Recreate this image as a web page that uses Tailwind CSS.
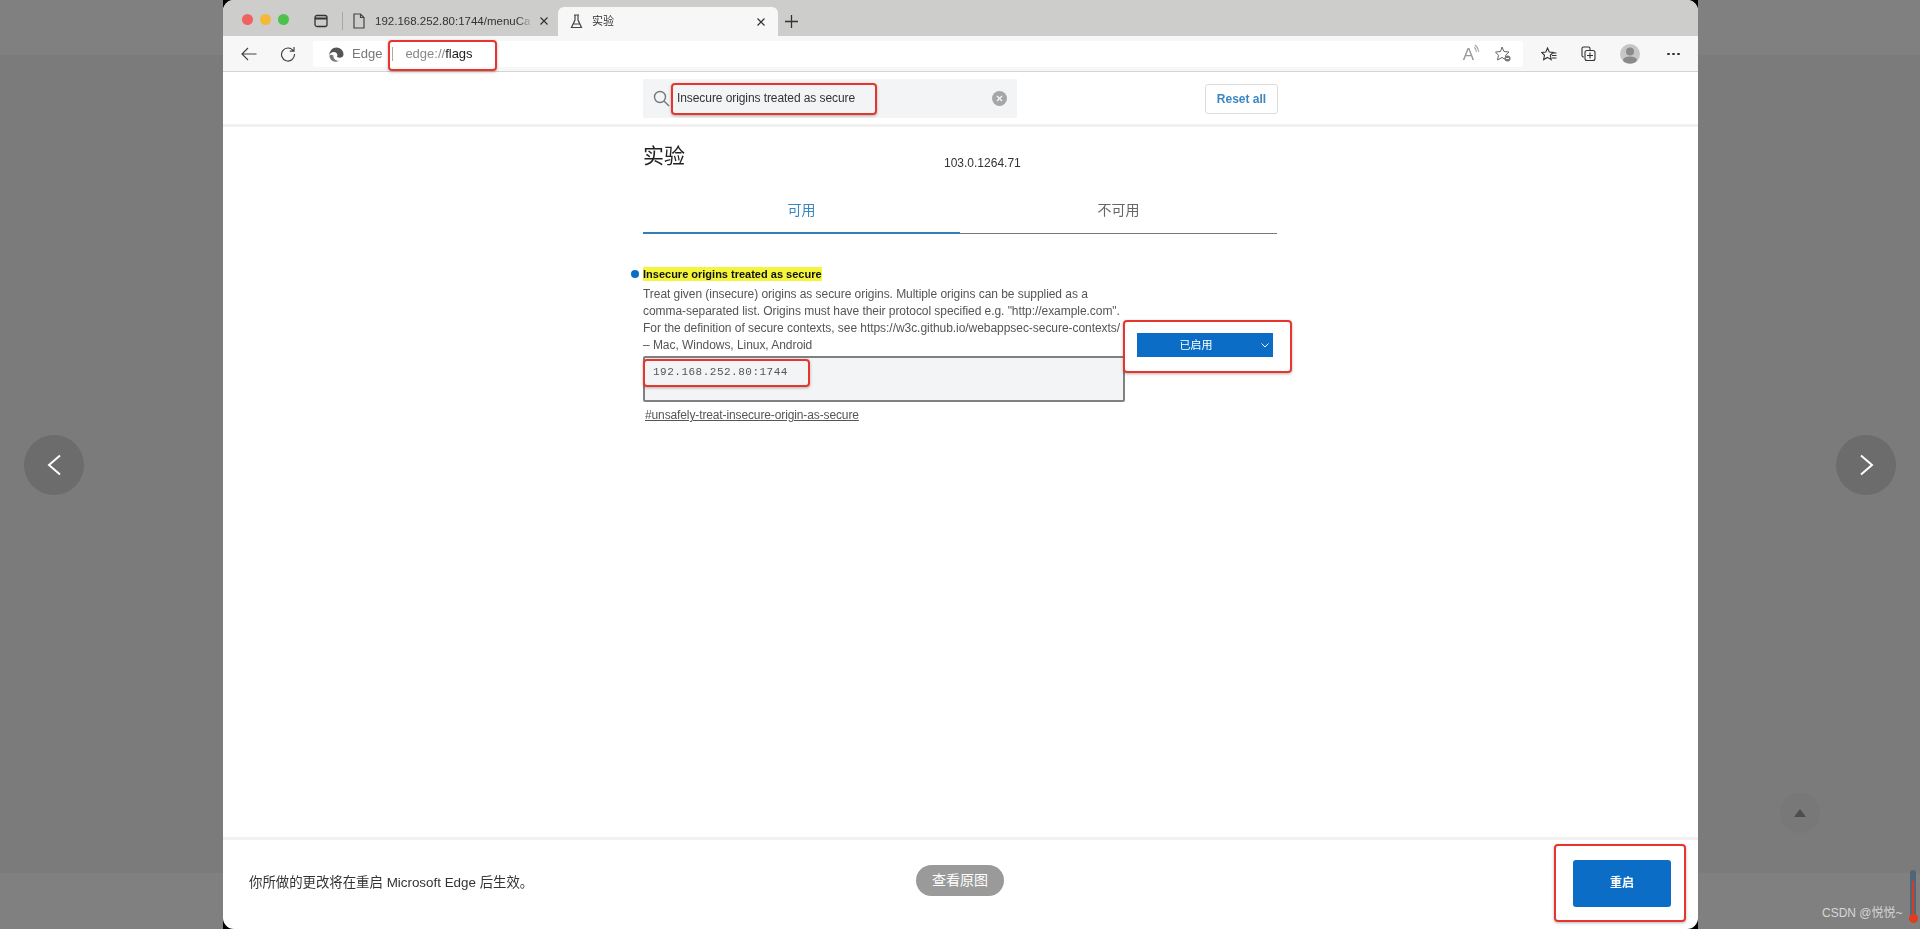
<!doctype html>
<html lang="zh"><head><meta charset="utf-8"><title>实验</title>
<script src="https://cdn.jsdelivr.net/npm/@tailwindcss/browser@4"></script></head>
<body class="bg-[#808080]">
<div class="relative w-[1920px] h-[929px] overflow-hidden bg-[#7b7b7b] font-['Liberation_Sans','Noto_Sans_CJK_SC',sans-serif]">
  <!-- dimmed page bands -->
  <div class="absolute inset-x-0 top-0 h-[55px] bg-[#808080]"></div>
  <div class="absolute inset-x-0 bottom-0 h-[56px] bg-[#808080]"></div>

  <!-- browser window -->
  <div class="relative ml-[223px] w-[1475px] h-[929px] bg-black blur-[0.4px]">
    <div class="flex flex-col h-full rounded-[11px] overflow-hidden bg-white">
      <!-- tab strip -->
      <div class="flex h-[36px] shrink-0 bg-[#cdcdcb]">
        <div class="flex items-center gap-[7px] pl-[19px] pt-[2px] w-[91px]">
          <span class="w-[11px] h-[11px] rounded-full bg-[#f0625f]"></span>
          <span class="w-[11px] h-[11px] rounded-full bg-[#f5b93a]"></span>
          <span class="w-[11px] h-[11px] rounded-full bg-[#4cc24a]"></span>
        </div>
        <div class="flex items-center pt-[6px]">
          <svg class="w-[14px] h-[14px]" viewBox="0 0 14 14" fill="none" stroke="#333" stroke-width="1.3"><rect x="1" y="1.5" width="12" height="11" rx="2"/><path d="M1 4.5h12" stroke-width="2"/></svg>
          <span class="w-px h-[18px] bg-[#a8a8a8] ml-[14px]"></span>
          <svg class="w-[12px] h-[16px] ml-[10px]" viewBox="0 0 12 16" fill="none" stroke="#444" stroke-width="1.2"><path d="M1 1h6.5L11 4.5V15H1zM7.5 1v3.5H11"/></svg>
          <span class="w-[158px] ml-[10px] text-[11.5px] leading-[16px] text-[#333] whitespace-nowrap [mask-image:linear-gradient(to_right,black_90%,transparent)]">192.168.252.80:1744/menuCa</span>
          <svg class="w-[8px] h-[8px] ml-[7px]" viewBox="0 0 8 8" stroke="#333" stroke-width="1.2"><path d="M.5.5l7 7M7.5.5l-7 7"/></svg>
        </div>
        <div class="flex items-center mt-[7px] h-[29px] ml-[10px] w-[220px] bg-[#f7f7f7] rounded-t-[6px] pl-[12px]">
          <svg class="w-[13px] h-[15px]" viewBox="0 0 13 15" fill="none" stroke="#444" stroke-width="1.2"><path d="M4 1h5M5 1v5L1.5 13.5h10L8 6V1M3.5 10h6"/></svg>
          <span class="ml-[9px] w-[22px] text-[11px] text-[#333]">实验</span>
          <svg class="w-[8px] h-[8px] ml-[143px]" viewBox="0 0 8 8" stroke="#333" stroke-width="1.2"><path d="M.5.5l7 7M7.5.5l-7 7"/></svg>
        </div>
        <svg class="w-[13px] h-[13px] ml-[7px] mt-[15px]" viewBox="0 0 13 13" stroke="#333" stroke-width="1.3"><path d="M6.5 0v13M0 6.5h13"/></svg>
      </div>

      <!-- toolbar -->
      <div class="flex items-center h-[36px] shrink-0 bg-[#f7f7f7] border-b border-[#d4d4d4] pt-[1px]">
        <svg class="w-[16px] h-[14px] ml-[18px]" viewBox="0 0 16 14" fill="none" stroke="#444" stroke-width="1.2"><path d="M15.5 7H1M7 1L1 7l6 6"/></svg>
        <svg class="w-[16px] h-[16px] ml-[23px]" viewBox="0 0 16 16" fill="none" stroke="#444" stroke-width="1.2"><path d="M13.5 5A6.5 6.5 0 1 0 14.5 8M14 1v4.2H9.8"/></svg>
        <div class="flex items-center ml-[17px] w-[1210px] h-[26px] bg-white rounded-[3px]">
          <svg class="w-[15px] h-[15px] ml-[16px]" viewBox="0 0 15 15"><path d="M7.5 0.5a7 7 0 0 1 7 7c0 2.2-2 3.2-3.8 3.2-1.6 0-2.8-.7-2.8-1.4 0-.4.5-.5.5-1.4 0-1.5-1.5-3-3.5-3-2.200 0-4 1.400-4.700 3.300C.4 4 3.300.5 7.500.5z" fill="#555"/><path d="M.4 8.500c0 3.600 3 6.200 6 6.200 1.200 0 2.500-.4 3.300-1C7 14 4 12 4.500 8.500 3 7.500 1 7.500.4 8.500z" fill="#777"/></svg>
          <span class="ml-[8px] text-[13px] text-[#777]">Edge</span>
          <span class="ml-[10px] w-px h-[14px] bg-[#aaa]"></span>
          <span class="ml-[12px] text-[13px] text-[#888]">edge://<span class="text-[#222]">flags</span></span>
          <div class="flex-1"></div>
          <span class="relative text-[17px] leading-[17px] text-[#999] mr-[21px]">A<svg class="absolute -top-[2px] left-[10px] w-[8px] h-[9px]" viewBox="0 0 6 8" fill="none" stroke="#aaa"><path d="M1 1c2 1 3 3 3.500 6M.5 3c1 .5 1.800 2 2 4"/></svg></span>
          <svg class="w-[16px] h-[16px] mr-[12px]" viewBox="0 0 16 16" fill="none" stroke="#666"><path d="M7 1l2 4.500 5 .5-3.500 3.300 1 4.700L7 11.500 2.500 14l1-4.700L0.500 6l5-.5z"/><circle cx="12.500" cy="12.500" r="3" fill="#777" stroke="none"/><path d="M11 12.500h3" stroke="#fff"/></svg>
        </div>
        <svg class="w-[16px] h-[15px] ml-[18px]" viewBox="0 0 16 15" fill="none" stroke="#333" stroke-width="1.1"><path d="M6.500 1l1.800 4 4 .4-3 2.900.9 4.300-3.700-2.200-3.900 2.200.9-4.300-2.900-2.900 4.300-.4zM11 6h4.500M11 8.500h4.500M11 11h4.500"/></svg>
        <svg class="w-[15px] h-[16px] ml-[24px]" viewBox="0 0 15 16" fill="none" stroke="#333" stroke-width="1.1"><path d="M3 11H2.500A1.500 1.500 0 0 1 1 9.500v-7A1.500 1.500 0 0 1 2.500 1h5A1.500 1.500 0 0 1 9 2.500V4"/><rect x="4" y="4.500" width="10" height="10" rx="2"/><path d="M9 6.500v6M6 9.500h6"/></svg>
        <svg class="w-[20px] h-[20px] ml-[24px]" viewBox="0 0 20 20"><circle cx="10" cy="10" r="10" fill="#c6c6c6"/><circle cx="10" cy="7.500" r="4" fill="#8a8a8a"/><ellipse cx="10" cy="16" rx="7" ry="3.500" fill="#8a8a8a"/></svg>
        <span class="flex gap-[2.500px] ml-[27px]"><i class="w-[2.500px] h-[2.500px] rounded-full bg-[#333]"></i><i class="w-[2.500px] h-[2.500px] rounded-full bg-[#333]"></i><i class="w-[2.500px] h-[2.500px] rounded-full bg-[#333]"></i></span>
      </div>

      <!-- search header -->
      <div class="flex items-center h-[55px] shrink-0 pl-[420px] border-b-[3px] border-[#f1f1f1]">
        <div class="flex items-center w-[374px] h-[39px] bg-[#f3f4f6] pl-[10px]">
          <svg class="w-[17px] h-[17px]" viewBox="0 0 17 17" fill="none" stroke="#777" stroke-width="1.400"><circle cx="7" cy="7" r="5.500"/><path d="M11 11l5 5"/></svg>
          <span class="ml-[7px] text-[12px] tracking-[-0.08px] text-[#333] whitespace-nowrap">Insecure origins treated as secure</span>
          <div class="flex-1"></div>
          <svg class="w-[15px] h-[15px] mr-[10px]" viewBox="0 0 15 15"><circle cx="7.500" cy="7.500" r="7.500" fill="#a6a6a6"/><path d="M5 5l5 5M10 5l-5 5" stroke="#f3f4f6" stroke-width="1.400"/></svg>
        </div>
        <button class="ml-[188px] w-[73px] h-[30px] mt-[2px] rounded-[3px] border border-[#dcdcdc] bg-white text-[12px] font-bold text-[#3d87c0]">Reset all</button>
      </div>

      <!-- main -->
      <div class="flex-1 pl-[420px]">
        <div class="w-[634px]">
          <div class="flex h-[62px]">
            <h1 class="w-[301px] pt-[12px] text-[21px] leading-[34px] font-normal text-[#222]">实验</h1>
            <span class="pt-[26px] text-[12px] leading-[20px] text-[#333]">103.0.1264.71</span>
          </div>
          <div class="flex h-[45px] border-b border-[#777]">
            <div class="w-1/2 h-[45px] border-b-2 border-[#2f7fbc] text-center text-[14px] leading-[42px] text-[#3a86c0]">可用</div>
            <div class="w-1/2 text-center text-[14px] leading-[43px] text-[#666]">不可用</div>
          </div>
          <div class="flex mt-[31px]">
            <div class="w-[482px]">
              <div class="flex items-center h-[17px] -ml-[12px]">
                <span class="w-[8px] h-[8px] rounded-full bg-[#0a6ec4] mr-[4px]"></span>
                <span class="text-[11px] leading-[14px] font-bold text-[#111] bg-[#f5f53c]">Insecure origins treated as secure</span>
              </div>
              <p class="mt-[4px] text-[12px] leading-[17px] tracking-[-0.05px] text-[#555] whitespace-nowrap">Treat given (insecure) origins as secure origins. Multiple origins can be supplied as a<br>comma-separated list. Origins must have their protocol specified e.g. "http://example.com".<br>For the definition of secure contexts, see https://w3c.github.io/webappsec-secure-contexts/<br>– Mac, Windows, Linux, Android</p>
              <div class="mt-[2px] h-[46px] bg-[#f3f4f6] border-2 border-[#808080] rounded-[2px] pl-[8px] pt-[7px] font-['Liberation_Mono',monospace] text-[11px] leading-[14px] tracking-[0.5px] text-[#555]">192.168.252.80:1744</div>
              <div class="mt-[5px] ml-[2px] text-[12px] leading-[17px] tracking-[-0.12px] text-[#555] underline">#unsafely-treat-insecure-origin-as-secure</div>
            </div>
            <div class="flex items-center ml-[12px] mt-[68px] w-[136px] h-[24px] bg-[#0b6dc5] text-white text-[11px]">
              <span class="flex-1 text-center pr-[6px]">已启用</span>
              <svg class="w-[8px] h-[5px] mr-[4px]" viewBox="0 0 8 5" fill="none" stroke="#fff"><path d="M.5.5L4 4 7.500.5"/></svg>
            </div>
          </div>
        </div>
      </div>

      <!-- footer -->
      <div class="flex items-center justify-between h-[92px] shrink-0 border-t-[3px] border-[#f1f1f1] pl-[26px] pr-[27px]">
        <span class="text-[13.4px] text-[#333] mt-[-3px]">你所做的更改将在重启 Microsoft Edge 后生效。</span>
        <button class="w-[98px] h-[47px] rounded-[3px] bg-[#0b6dc5] text-white text-[12px] font-bold mt-[-3px]">重启</button>
      </div>
    </div>

    <!-- red annotation boxes -->
    <div class="absolute left-[165px] top-[40px] w-[109px] h-[31px] border-[2.5px] border-[#e5352d] rounded-[4px] shadow-[0_1px_3px_rgba(0,0,0,0.3)]"></div>
    <div class="absolute left-[448px] top-[83px] w-[206px] h-[32px] border-[2.5px] border-[#e5352d] rounded-[4px] shadow-[0_1px_3px_rgba(0,0,0,0.3)]"></div>
    <div class="absolute left-[900px] top-[320px] w-[169px] h-[53px] border-[2.5px] border-[#e5352d] rounded-[4px] shadow-[0_1px_3px_rgba(0,0,0,0.3)]"></div>
    <div class="absolute left-[420px] top-[359px] w-[167px] h-[28px] border-[2.5px] border-[#e5352d] rounded-[4px] shadow-[0_1px_3px_rgba(0,0,0,0.3)]"></div>
    <div class="absolute left-[1331px] top-[844px] w-[132px] h-[78px] border-[2.5px] border-[#e5352d] rounded-[4px] shadow-[0_1px_3px_rgba(0,0,0,0.3)]"></div>
  </div>

  <!-- viewer overlay -->
  <button class="absolute left-[24px] top-[435px] w-[60px] h-[60px] rounded-full bg-[#6c6c6c] flex items-center justify-center">
    <svg class="w-[14px] h-[22px]" viewBox="0 0 14 22" fill="none" stroke="#fff" stroke-width="2"><path d="M13 1.500L2 11l11 9.500"/></svg>
  </button>
  <button class="absolute left-[1836px] top-[435px] w-[60px] h-[60px] rounded-full bg-[#6c6c6c] flex items-center justify-center">
    <svg class="w-[14px] h-[22px] ml-[2px]" viewBox="0 0 14 22" fill="none" stroke="#fff" stroke-width="2"><path d="M1 1.500L12 11 1 20.500"/></svg>
  </button>
  <button class="absolute left-[916px] top-[865px] w-[88px] h-[31px] rounded-[16px] bg-[#9a9a9a] text-white text-[14px]">查看原图</button>
  <div class="absolute left-[1780px] top-[793px] w-[40px] h-[40px] rounded-full bg-[#787878] flex items-center justify-center">
    <svg class="w-[12px] h-[8px]" viewBox="0 0 12 8"><path d="M6 0l6 8H0z" fill="#4d4d4d"/></svg>
  </div>
  <span class="absolute left-[1822px] top-[905px] text-[12px] leading-[16px] text-[#d6d6d6]">CSDN @悦悦~</span>
  <div class="absolute left-[1910px] top-[870px] w-[6px] h-[50px] rounded-full bg-[#4f6678] flex justify-center">
    <span class="w-[2px] h-[38px] mt-[11px] bg-[#d93a22]"></span>
  </div>
  <span class="absolute left-[1909px] top-[914px] w-[9px] h-[9px] rounded-full bg-[#e03c1e]"></span>
</div>
</body></html>
